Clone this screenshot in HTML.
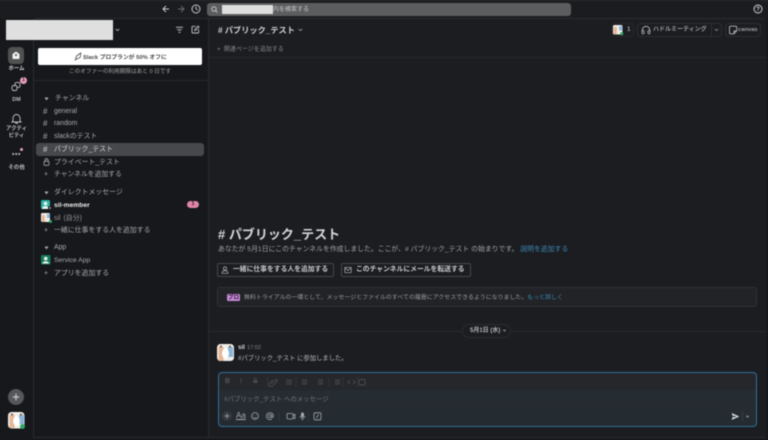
<!DOCTYPE html>
<html lang="ja"><head><meta charset="utf-8"><title>Slack</title>
<style>
*{box-sizing:border-box}
html,body{margin:0;padding:0;background:#17181b;width:768px;height:440px;overflow:hidden}
body{font-family:"Liberation Sans","Noto Sans CJK JP",sans-serif;color:#c9cacb;position:relative}
#r{position:absolute;inset:0;filter:blur(.45px)}
.a{position:absolute;white-space:nowrap;line-height:12px;height:12px;transform:translateY(1px)}
.b{position:absolute}
svg{position:absolute;overflow:visible;fill:none}
.s{font-size:6.9px;color:#a9aaac}
.g{font-size:8px;color:#a9aaac}
.btn{position:absolute;border:1px solid #45474b;border-radius:2px;height:14px;font-size:6.8px;font-weight:bold;color:#c9cacb;line-height:12px;white-space:nowrap}
</style></head><body><div id="r">
<div class="b" style="left:0;top:0;width:768px;height:18px;background:#1b1c20"></div>
<div class="b" style="left:0;top:0;width:768px;height:1px;background:#2a2b2e"></div>
<div class="b" style="left:33px;top:18px;width:733px;height:420px;background:#17181b;border:1px solid #2a2c30;border-radius:3px 3px 0 0"></div>
<div class="b" style="left:208px;top:19px;width:558px;height:418px;background:#1b1d21;border-left:1px solid #2a2c30"></div>

<!-- top bar -->
<svg style="left:162px;top:5px" width="8" height="8" viewBox="0 0 8 8"><path d="M7 4H1M4 1L1 4l3 3" stroke="#c8c9ca" stroke-width="1"/></svg>
<svg style="left:177px;top:5px" width="8" height="8" viewBox="0 0 8 8"><path d="M1 4h6M4 1l3 3-3 3" stroke="#67686a" stroke-width="1"/></svg>
<svg style="left:191px;top:4px" width="10" height="10" viewBox="0 0 10 10"><circle cx="5" cy="5" r="4" stroke="#c8c9ca" stroke-width="1"/><path d="M5 2.5V5l1.8 1" stroke="#c8c9ca" stroke-width=".9"/></svg>
<div class="b" style="left:207px;top:3px;width:364px;height:13px;background:#5c5d5f;border-radius:3px"></div>
<svg style="left:211px;top:6px" width="7" height="7" viewBox="0 0 7 7"><circle cx="3" cy="3" r="2.2" stroke="#d2d2d3" stroke-width=".8"/><path d="M4.7 4.7L6.5 6.5" stroke="#d2d2d3" stroke-width=".8"/></svg>
<div class="b" style="left:222px;top:5px;width:51px;height:9px;background:#dedede"></div>
<div class="a" style="left:273px;top:3px;font-size:6px;color:#c8c8c9">内を検索する</div>
<svg style="left:753px;top:4px" width="10" height="10" viewBox="0 0 10 10"><circle cx="5" cy="5" r="4" stroke="#cfd0d1" stroke-width="1"/><text x="5" y="7.2" font-size="6" font-weight="bold" text-anchor="middle" fill="#cfd0d1" font-family="Liberation Sans">?</text></svg>

<!-- workspace -->
<div class="b" style="left:6px;top:20px;width:107px;height:20px;background:#dfdfdf"></div>
<svg style="left:115px;top:28px" width="5" height="4" viewBox="0 0 5 4"><path d="M.7 1l1.8 1.6L4.3 1" stroke="#a5a6a8" stroke-width=".9"/></svg>
<svg style="left:175px;top:26px" width="9" height="8" viewBox="0 0 9 8"><path d="M1 1.3h7M2.3 3.8h4.4M3.5 6.3h2" stroke="#a9aaab" stroke-width="1.1"/></svg>
<svg style="left:191px;top:25px" width="9" height="9" viewBox="0 0 9 9"><path d="M4.5 1.3H1.6a.6.6 0 0 0-.6.6v5.5c0 .3.3.6.6.6h5.5c.3 0 .6-.3.6-.6V4.5" stroke="#c2c3c4" stroke-width=".9"/><path d="M3.6 5.6l.3-1.5L7 1l1.1 1.1-3 3z" stroke="#c2c3c4" stroke-width=".8"/></svg>

<!-- rail -->
<div class="b" style="left:8px;top:47px;width:16px;height:17px;background:#505153;border-radius:4px"></div>
<svg style="left:12px;top:51px" width="8" height="9" viewBox="0 0 8 9"><path d="M4 .5L7.5 3v5H.5V3z" fill="#eee"/><circle cx="4" cy="4" r="1" fill="#505153"/></svg>
<div class="a" style="left:0;top:62px;width:33px;text-align:center;font-size:5.4px;font-weight:bold;color:#d6d6d7">ホーム</div>
<svg style="left:11px;top:81px" width="11" height="11" viewBox="0 0 11 11"><rect x="1" y="4.5" width="5" height="5" rx="1.7" stroke="#c0c1c2" stroke-width=".9"/><path d="M4 4.5V3a1.6 1.6 0 0 1 1.6-1.6h1.8A1.6 1.6 0 0 1 9 3v1.8a1.6 1.6 0 0 1-1.6 1.6H6" stroke="#c0c1c2" stroke-width=".9"/></svg>
<div class="b" style="left:20px;top:77px;width:7px;height:7px;border-radius:50%;background:#e8a0bd;color:#3b1f2a;font-size:5px;font-weight:bold;text-align:center;line-height:7px">1</div>
<div class="a" style="left:0;top:93px;width:33px;text-align:center;font-size:5.4px;font-weight:bold;color:#b9babb">DM</div>
<svg style="left:11px;top:113px" width="11" height="11" viewBox="0 0 11 11"><path d="M2 8V5a3.5 3.5 0 0 1 7 0v3l1 1H1zM4.5 9.5a1 1 0 0 0 2 0" stroke="#c0c1c2" stroke-width=".9"/></svg>
<div class="b" style="left:0;top:126px;width:33px;text-align:center;font-size:5.4px;line-height:7px;font-weight:bold;color:#b9babb">アクティ<br>ビティ</div>
<svg style="left:12px;top:152px" width="9" height="4" viewBox="0 0 9 4"><circle cx="1.2" cy="2" r="1" fill="#c8c9ca"/><circle cx="4.2" cy="2" r="1" fill="#c8c9ca"/><circle cx="7.2" cy="2" r="1" fill="#c8c9ca"/></svg>
<div class="b" style="left:20px;top:148px;width:3px;height:3px;border-radius:50%;background:#e8a0bd"></div>
<div class="a" style="left:0;top:161px;width:33px;text-align:center;font-size:5.4px;font-weight:bold;color:#b9babb">その他</div>
<div class="b" style="left:8px;top:389px;width:16px;height:16px;border-radius:50%;background:#565759"></div>
<svg style="left:12px;top:393px" width="8" height="8" viewBox="0 0 8 8"><path d="M4 .8v6.4M.8 4h6.4" stroke="#c7c8c9" stroke-width="1.2"/></svg>
<svg style="left:8px;top:412px" width="17" height="17" viewBox="0 0 17 17"><rect width="16.5" height="16.5" rx="3.5" fill="#f1efe9"/><rect x="1.5" y="3" width="5" height="13" fill="#e5b897"/><rect x="11" y="3" width="5" height="9" fill="#88b5d9"/><ellipse cx="8.5" cy="9" rx="3.4" ry="5" fill="#fff"/><path d="M3 2.5h2M12 2.5h2" stroke="#694a33" stroke-width="1.5"/></svg>
<div class="b" style="left:20px;top:424px;width:5px;height:5px;border-radius:50%;background:#2fa866"></div>

<!-- promo -->
<div class="b" style="left:38px;top:48px;width:164px;height:17px;background:#fff;border-radius:2px"></div>
<svg style="left:74px;top:52px" width="8" height="9" viewBox="0 0 8 9"><path d="M1.5 7.5L2.5 4 6.8 1 6.3 5.3 3 7zM.8 8.3l1.2-1.2" stroke="#47484a" stroke-width=".8"/></svg>
<div class="a" style="left:83px;top:50.5px;font-size:5.8px;font-weight:bold;color:#48494b">Slack プロプランが 50% オフに</div>
<div class="a" style="left:38px;top:65px;width:164px;text-align:center;font-size:5.65px;color:#a3a4a6">このオファーの利用期限はあと 0 日です</div>
<div class="b" style="left:33px;top:80px;width:175px;height:1px;background:#26282b"></div>

<!-- channels -->
<div class="b" style="left:36px;top:142.5px;width:168px;height:13px;background:#46484b;border-radius:3px"></div>
<svg style="left:44px;top:97px" width="5" height="4" viewBox="0 0 5 4"><path d="M.5.5h4L2.5 3.5z" fill="#a9aaac"/></svg>
<div class="a s" style="left:55px;top:92px">チャンネル</div>
<div class="a g" style="left:43px;top:104.5px">#</div><div class="a s" style="left:54px;top:104.5px">general</div>
<div class="a g" style="left:43px;top:117px">#</div><div class="a s" style="left:54px;top:117px">random</div>
<div class="a g" style="left:43px;top:130px">#</div><div class="a s" style="left:54px;top:130px">slackのテスト</div>
<div class="a g" style="left:43px;top:143px;color:#d4d5d6">#</div><div class="a s" style="left:54px;top:143px;color:#d4d5d6">パブリック_テスト</div>
<svg style="left:43px;top:157.5px" width="7" height="8" viewBox="0 0 7 8"><rect x="1" y="3.3" width="5" height="4" rx=".8" stroke="#a9aaac" stroke-width=".8"/><path d="M2 3.3V2.2a1.5 1.5 0 0 1 3 0v1.1" stroke="#a9aaac" stroke-width=".8"/></svg>
<div class="a s" style="left:54px;top:155.5px">プライベート_テスト</div>
<div class="a s" style="left:44px;top:168px">+</div><div class="a s" style="left:54px;top:168px;font-size:6.8px">チャンネルを追加する</div>

<svg style="left:44px;top:191px" width="5" height="4" viewBox="0 0 5 4"><path d="M.5.5h4L2.5 3.5z" fill="#a9aaac"/></svg>
<div class="a s" style="left:54px;top:185.5px">ダイレクトメッセージ</div>
<svg style="left:41px;top:200px" width="10" height="10" viewBox="0 0 10 10"><rect width="9" height="9" rx="1.5" fill="#2fb3a3"/><circle cx="4.5" cy="3.6" r="1.8" fill="#e8f6f3"/><path d="M1 9a3.5 3 0 0 1 7 0z" fill="#e8f6f3"/></svg>
<div class="b" style="left:48px;top:206px;width:3.5px;height:3.5px;border-radius:50%;background:#8b8c8e;border:1px solid #17181b"></div>
<div class="a s" style="left:54px;top:198.5px;font-size:6.7px;font-weight:bold;color:#e9e9ea">sil-member</div>
<div class="b" style="left:187px;top:201px;width:12px;height:7px;border-radius:4px;background:#df86a8;color:#3a1c29;font-size:5.5px;font-weight:bold;text-align:center;line-height:7px">1</div>
<svg style="left:41px;top:212.5px" width="10" height="10" viewBox="0 0 10 10"><rect width="9" height="9" rx="1.5" fill="#f0eee8"/><rect x=".8" y="2" width="3" height="7" fill="#e4b593"/><rect x="6" y="1" width="3" height="4" fill="#8ab5d7"/></svg>
<div class="b" style="left:49px;top:219.5px;width:3px;height:3px;border-radius:50%;background:#2fa866"></div>
<div class="a s" style="left:54px;top:211.5px;color:#94959a">sil<span style="margin-left:3px">(自分)</span></div>
<div class="a s" style="left:44px;top:224px">+</div><div class="a s" style="left:54px;top:224px">一緒に仕事をする人を追加する</div>

<svg style="left:44px;top:245.5px" width="5" height="4" viewBox="0 0 5 4"><path d="M.5.5h4L2.5 3.5z" fill="#a9aaac"/></svg>
<div class="a s" style="left:54px;top:241px">App</div>
<svg style="left:41px;top:255px" width="10" height="10" viewBox="0 0 10 10"><rect width="9.5" height="9.5" rx="1" fill="#167a5b"/><circle cx="4.75" cy="3.6" r="1.8" fill="#e8f3ef"/><path d="M1.2 8.5a3.6 3 0 0 1 7 0z" fill="#e8f3ef"/></svg>
<div class="a s" style="left:54px;top:254px;font-size:6.8px">Service App</div>
<div class="a s" style="left:44px;top:267px">+</div><div class="a s" style="left:54px;top:267px">アプリを追加する</div>

<!-- main header -->
<div class="a" style="left:218px;top:24px;font-size:8.2px;font-weight:bold;color:#d0d1d2"># パブリック_テスト</div>
<svg style="left:298px;top:28px" width="5" height="4" viewBox="0 0 5 4"><path d="M.7 1l1.8 1.6L4.3 1" stroke="#a5a6a8" stroke-width=".8"/></svg>
<div class="a" style="left:217px;top:42.5px;font-size:6px;color:#86878a">+ &nbsp;関連ページを追加する</div>
<div class="b" style="left:209px;top:57px;width:557px;height:1px;background:#26282b"></div>

<div class="b" style="left:612px;top:23px;width:22px;height:14px;border:1px solid #26282b;border-radius:3px"></div>
<svg style="left:613px;top:25px" width="11" height="11" viewBox="0 0 11 11"><rect width="9.5" height="9.5" rx="1.5" fill="#f0eee8"/><rect x=".8" y="2" width="3" height="7.5" fill="#e4b593"/><rect x="6.2" y="1" width="3" height="4.5" fill="#8ab5d7"/><circle cx="8.7" cy="8.7" r="1.6" fill="#2fa866"/></svg>
<div class="a" style="left:627px;top:23px;font-size:6.3px;font-weight:bold;color:#9c9d9f">1</div>
<div class="b" style="left:637px;top:23px;width:85px;height:14px;border:1px solid #2c2e32;border-radius:4px"></div>
<div class="b" style="left:711px;top:24px;width:1px;height:12px;background:#2c2e32"></div>
<svg style="left:641px;top:25px" width="10" height="10" viewBox="0 0 10 10"><path d="M1.3 6.5V5a3.7 3.7 0 0 1 7.4 0v1.5" stroke="#b5b6b7" stroke-width=".9"/><rect x="1" y="5.5" width="2" height="3.3" rx=".8" stroke="#b5b6b7" stroke-width=".8"/><rect x="7" y="5.5" width="2" height="3.3" rx=".8" stroke="#b5b6b7" stroke-width=".8"/></svg>
<div class="a" style="left:653px;top:23px;font-size:6px;font-weight:bold;color:#9c9d9f">ハドルミーティング</div>
<svg style="left:714px;top:28px" width="5" height="4" viewBox="0 0 5 4"><path d="M.7 1l1.8 1.6L4.3 1" stroke="#8c8d8f" stroke-width=".8"/></svg>
<div class="b" style="left:725px;top:23px;width:36px;height:14px;border:1px solid #2c2e32;border-radius:4px"></div>
<svg style="left:728px;top:25px" width="10" height="10" viewBox="0 0 10 10"><path d="M2.5 1.2h5.2c.6 0 1 .4 1 1V6L6 8.8H2.5c-.6 0-1-.4-1-1V2.2c0-.6.4-1 1-1zM8.6 6H6v2.7" stroke="#b5b6b7" stroke-width=".9"/></svg>
<div class="a" style="left:738px;top:23px;font-size:5.8px;font-weight:bold;color:#9c9d9f">canvas</div>

<!-- intro -->
<div class="a" style="left:218px;top:224px;height:20px;line-height:20px;font-size:13px;font-weight:bold;color:#d4d5d6"># パブリック_テスト</div>
<div class="a" style="left:218px;top:243px;font-size:6.85px;color:#a2a3a5">あなたが 5月1日にこのチャンネルを作成しました。ここが、# パブリック_テスト の始まりです。 <span style="color:#3d8bb5">説明を追加する</span></div>
<div class="btn" style="left:217px;top:263px;width:117px;padding-left:15px">一緒に仕事をする人を追加する</div>
<svg style="left:221px;top:266px" width="8" height="8" viewBox="0 0 8 8"><circle cx="4" cy="2.5" r="1.6" stroke="#b8b9ba" stroke-width=".7"/><path d="M1 7.3c0-1.8 1.3-2.6 3-2.6s3 .8 3 2.6z" stroke="#b8b9ba" stroke-width=".7"/></svg>
<div class="btn" style="left:341px;top:263px;width:130px;padding-left:14px">このチャンネルにメールを転送する</div>
<svg style="left:344px;top:266px" width="8" height="8" viewBox="0 0 8 8"><rect x=".8" y="1.3" width="6.4" height="5.4" rx=".6" stroke="#b8b9ba" stroke-width=".7"/><path d="M1 2l3 2.4L7 2" stroke="#b8b9ba" stroke-width=".7"/></svg>

<div class="b" style="left:217px;top:287px;width:540px;height:20px;background:#212327;border:1px solid #2e3034;border-radius:3px"></div>
<div class="b" style="left:227px;top:294px;width:13px;height:7px;background:#c489d8;border-radius:1px"></div>
<div class="a" style="left:227px;top:290.5px;width:13px;text-align:center;font-size:5.6px;font-weight:bold;color:#2c1b33">プロ</div>
<div class="a" style="left:244px;top:291px;font-size:5.94px;color:#9a9b9d">無料トライアルの一環として、メッセージとファイルのすべての履歴にアクセスできるようになりました。<span style="color:#3d8bb5">もっと詳しく</span></div>

<!-- date -->
<div class="b" style="left:209px;top:331px;width:557px;height:1px;background:#27292c"></div>
<div class="b" style="left:462px;top:324px;width:49px;height:14px;background:#1b1d21;border:1px solid #2a2c30;border-radius:7px"></div>
<div class="a" style="left:470px;top:324px;font-size:6px;font-weight:bold;color:#b5b6b7">5月1日 (水)</div>
<svg style="left:502px;top:329px" width="5" height="4" viewBox="0 0 5 4"><path d="M.5.8h4L2.5 3z" fill="#76777a"/></svg>

<!-- message -->
<svg style="left:217px;top:344px" width="17" height="17" viewBox="0 0 17 17"><rect width="17" height="17" rx="3.5" fill="#f1efe9"/><rect x="1.5" y="3" width="5" height="14" fill="#e5b897"/><rect x="11" y="3" width="5" height="10" fill="#88b5d9"/><ellipse cx="8.5" cy="9.5" rx="3.5" ry="5.2" fill="#fff"/><path d="M3 2.5h2M12 2.5h2" stroke="#694a33" stroke-width="1.5"/></svg>
<div class="a" style="left:238px;top:341px;font-size:6.2px;font-weight:bold;color:#d2d3d4">sil</div>
<div class="a" style="left:247px;top:341px;font-size:5.6px;color:#87888a">17:02</div>
<div class="a" style="left:238px;top:351.5px;font-size:6.3px;color:#b7b8b9">#パブリック_テスト に参加しました。</div>

<!-- composer -->
<div class="b" style="left:218px;top:372px;width:539px;height:55px;border:1.3px solid #2f7299;border-radius:4px;background:linear-gradient(#25272b 0,#25272b 17px,#262c32 18px,#242b31 100%)"></div>
<div class="a" style="left:225px;top:375px;font-size:7px;font-weight:bold;color:#55575a">B</div>
<div class="a" style="left:240px;top:375px;font-size:7px;font-style:italic;color:#55575a">I</div>
<div class="a" style="left:253px;top:375px;font-size:7px;text-decoration:line-through;color:#55575a">S</div>
<svg style="left:265px;top:377px" width="110" height="10" viewBox="0 0 110 10"><path d="M1.5 0v10M30 0v10M63 0v10M77 0v10M91 0v10" stroke="#38393d" stroke-width=".7" transform="translate(1)"/><path d="M6 7l4-4a1.2 1.2 0 0 1 1.8 1.8L7.5 9a2 2 0 0 1-3-3l3.2-3" stroke="#55575a" stroke-width=".7"/><path d="M21 3h6M21 5h6M21 7h6M37 3h5M37 5h5M37 7h5M53 3h5M53 5h5M53 7h5M70 3h5M70 5h5M70 7h5" stroke="#55575a" stroke-width=".8"/><path d="M85 3l-2 2 2 2M88 3l2 2-2 2" stroke="#55575a" stroke-width=".7"/><rect x="94" y="2.5" width="6" height="5.5" rx=".8" stroke="#55575a" stroke-width=".7"/></svg>
<div class="a" style="left:224px;top:392.5px;font-size:6.4px;color:#747578">#パブリック_テスト へのメッセージ</div>
<div class="b" style="left:222px;top:411px;width:10px;height:10px;border-radius:50%;background:#34383d"></div>
<svg style="left:224px;top:413px" width="6" height="6" viewBox="0 0 6 6"><path d="M3 .5v5M.5 3h5" stroke="#a9aaac" stroke-width=".8"/></svg>
<div class="a" style="left:236px;top:409px;font-size:8px;text-decoration:underline;color:#a9aaac">Aa</div>
<svg style="left:251px;top:412px" width="120" height="9" viewBox="0 0 120 9"><circle cx="4" cy="4" r="3.4" stroke="#a9aaac" stroke-width=".8"/><path d="M2.7 3v.5M5.3 3v.5M2.5 5.2c.8 1 2.2 1 3 0" stroke="#a9aaac" stroke-width=".7"/><circle cx="19" cy="4" r="1.5" stroke="#a9aaac" stroke-width=".8"/><path d="M20.5 2.5v2.3c0 1 1.9 1 1.9-.8a3.5 3.5 0 1 0-1.5 3" stroke="#a9aaac" stroke-width=".8"/><path d="M28 0v9M57 0v9" stroke="#3a3d41" stroke-width=".7"/><rect x="36" y="1.5" width="6" height="5.5" rx="1" stroke="#a9aaac" stroke-width=".8"/><path d="M42 3.5l2-1.2v4.2L42 5.5" stroke="#a9aaac" stroke-width=".8"/><rect x="50" y=".5" width="3" height="5" rx="1.5" fill="#a9aaac"/><path d="M49 4c0 3.3 5 3.3 5 0M51.5 6.5V8.5" stroke="#a9aaac" stroke-width=".7"/><rect x="63" y=".8" width="7" height="7" rx="1" stroke="#a9aaac" stroke-width=".8"/><path d="M65.5 6l2-3.5" stroke="#a9aaac" stroke-width=".8"/></svg>
<svg style="left:731px;top:412px" width="9" height="9" viewBox="0 0 9 9"><path d="M.6 1l7.8 3.5L.6 8l1-3h3V4h-3z" fill="#d4d5d6"/></svg>
<div class="b" style="left:742px;top:411px;width:1px;height:10px;background:#3a3d41"></div>
<svg style="left:745px;top:415px" width="5" height="4" viewBox="0 0 5 4"><path d="M.7.8h3.6L2.5 3z" fill="#8a8b8d"/></svg>
</div></body></html>
